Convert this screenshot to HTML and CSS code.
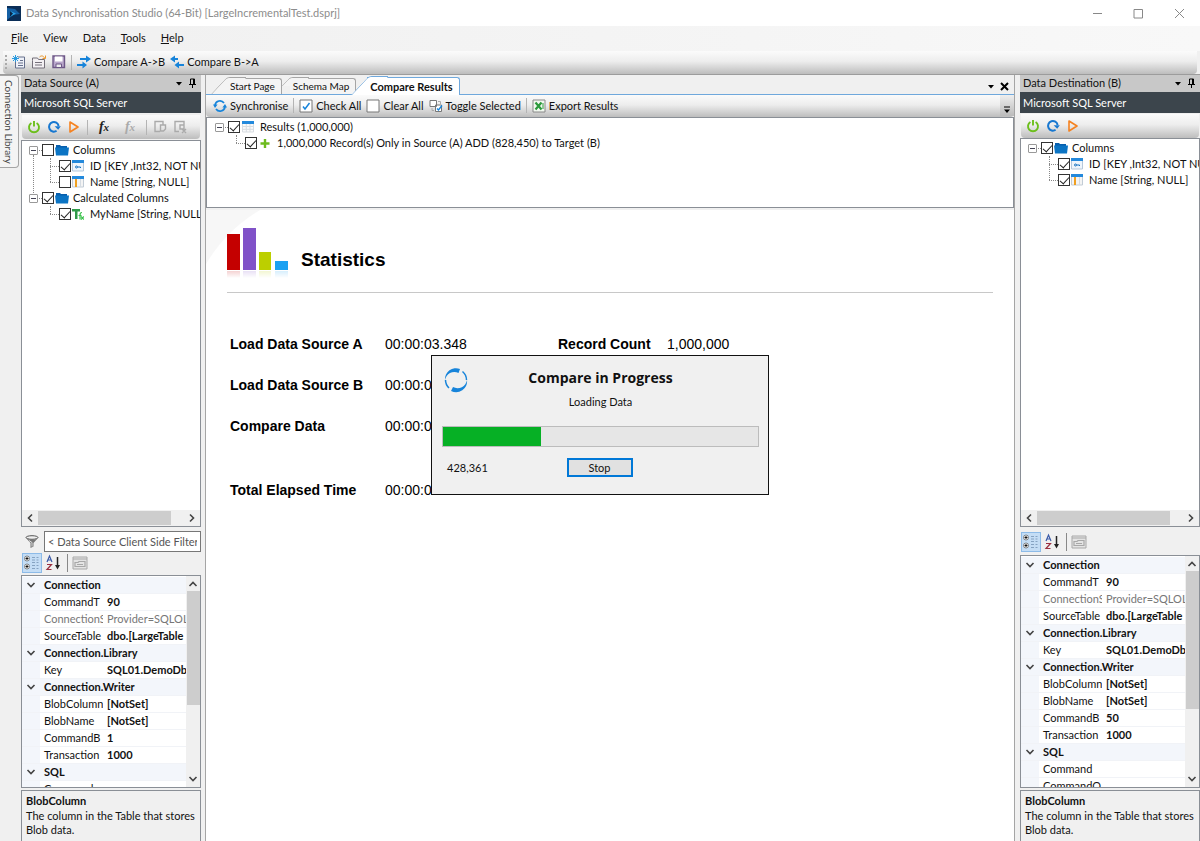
FILE: index.html
```html
<!DOCTYPE html>
<html lang="en">
<head>
    <meta charset="UTF-8">
    <meta name="viewport" content="width=device-width, initial-scale=1.0">
    <title>Data Synchronisation Studio</title>
    <link rel="stylesheet" href="styles.css">
</head>
<body>
    <!-- Shared icons -->
    <svg class="sprite" aria-hidden="true">
        <symbol id="i-power" viewBox="0 0 14 14"><path d="M4.4 3A5 5 0 1 0 9.6 3M7 1v5.5" fill="none" stroke="#6cbf1c" stroke-width="1.9"/></symbol>
        <symbol id="i-refresh" viewBox="0 0 14 14"><path d="M9.6 10.8A4.8 4.8 0 1 1 11.6 6" fill="none" stroke="#1878d0" stroke-width="2"/><path d="M7.6 6.2h6.2l-2.6 3.6z" fill="#1878d0"/></symbol>
        <symbol id="i-play" viewBox="0 0 14 14"><path d="M3 2l8 5-8 5z" fill="none" stroke="#f58220" stroke-width="1.6" stroke-linejoin="round"/></symbol>
        <symbol id="i-folder" viewBox="0 0 14 12"><path d="M1 1h4l1 1h6v9H1z" fill="#075fae"/><path d="M0 3.500h14l-1 8H1z" fill="#0b74c4"/></symbol>
        <symbol id="i-key" viewBox="0 0 12 12"><path d="M.5.500h11v10.500H.5z" fill="#eef5fc" stroke="#b5c7da"/><path d="M0 0h12v3H0z" fill="#2389dc"/><circle cx="4.500" cy="7" r="1" fill="none" stroke="#1270c0"/><path d="M5.500 7h3v1" fill="none" stroke="#1270c0"/></symbol>
        <symbol id="i-field" viewBox="0 0 12 12"><path d="M.5.500h11v10.500H.5z" fill="#f4f4f4" stroke="#c2ccd6"/><path d="M0 0h12v3H0z" fill="#2389dc"/><path d="M3 3h2v8H3z" fill="#f0a020"/><path d="M8.500 3v8" stroke="#d5dbe2"/></symbol>
        <symbol id="i-grid" viewBox="0 0 12 12"><path d="M.5.500h11v10.500H.5zM4.300 3v8M8 3v8M1 5.500h10M1 8.300h10" fill="#fafafa" stroke="#d8dde2"/><path d="M0 0h12v3H0z" fill="#2389dc"/></symbol>
        <symbol id="i-pin" viewBox="0 0 9 10"><path d="M2.500 6V1h4v5M5.500 1v5M1 6.500h7M4.500 6.500V10" fill="none" stroke="#000"/></symbol>
        <symbol id="i-down" viewBox="0 0 8 5"><path d="M1 1h6L4 4.500z" fill="#000"/></symbol>
        <symbol id="i-chev" viewBox="0 0 10 6"><path d="M1.500 1L5 4.500 8.500 1" fill="none" stroke="#444" stroke-width="1.600"/></symbol>
        <symbol id="i-sort" viewBox="0 0 18 18"><path d="M2 8l2.500-6L7 8M3 6h3" fill="none" stroke="#3b5aa8" stroke-width="1.200"/><path d="M2 10.500h4.500L2 15.500h4.500" fill="none" stroke="#9b3040" stroke-width="1.200"/><path d="M12.500 3v10" stroke="#222" stroke-width="1.500"/><path d="M10 11h5l-2.500 4.500z" fill="#222"/></symbol>
        <symbol id="i-cat" viewBox="0 0 18 18"><circle cx="4" cy="4.500" r="2.500" fill="#fff" stroke="#555" stroke-width=".7"/><circle cx="4" cy="12.500" r="2.500" fill="#fff" stroke="#555" stroke-width=".7"/><path d="M2.500 4.500h3M4 3v3M2.500 12.500h3M4 11v3" stroke="#111"/><path d="M9 3.500h3M9 6h3M9 8.500h3M9 11.500h3M9 14.500h3M13.500 3.500h2M13.500 6h2M13.500 8.500h2M13.500 11.500h2M13.500 14.500h2" stroke="#86a3c2"/></symbol>
        <symbol id="i-pages" viewBox="0 0 16 16"><path d="M1 2h14v12H1z" fill="#e4e4e4" stroke="#a8a8a8"/><path d="M1 4h14M3 7.500h3l1-1h6v5H3zM5 9.500h6" fill="none" stroke="#a8a8a8" stroke-width="1.200"/></symbol>
        <symbol id="i-sync" viewBox="0 0 14 14"><path d="M2 6A5 5 0 0 1 11 4M12 8A5 5 0 0 1 3 10" fill="none" stroke="#1784da" stroke-width="1.700"/><path d="M0 5.500h4.600L2 9zM9.400 8.500H14L12 5z" fill="#1784da"/></symbol>
    </svg>

    <header class="titlebar">
        <svg class="logo" width="14" height="15" viewBox="0 0 14 15"><path d="M0 0h14v15H0z" fill="#0b2e57"/><path d="M0 2l8 1 5 5-7 1-6 5z" fill="#1560a4"/><path d="M3 5l6 2.500L3 11z" fill="#29a3e8"/><path d="M3 5l3 2.500L3 11z" fill="#0a2444"/></svg>
        <span class="title">Data Synchronisation Studio (64-Bit) [LargeIncrementalTest.dsprj]</span>
        <button class="win-btn" aria-label="Minimize"><svg width="11" height="11"><path d="M1 5.500h9" stroke="#888"/></svg></button>
        <button class="win-btn" aria-label="Maximize"><svg width="11" height="11"><path d="M1 1.500h8.500v8.500H1z" fill="none" stroke="#888"/></svg></button>
        <button class="win-btn" aria-label="Close"><svg width="11" height="11"><path d="M1 1l9 9M10 1l-9 9" stroke="#888"/></svg></button>
    </header>

    <nav class="menubar">
        <button><u>F</u>ile</button>
        <button>View</button>
        <button>Data</button>
        <button><u>T</u>ools</button>
        <button><u>H</u>elp</button>
    </nav>

    <div class="toolbar main-toolbar">
        <span class="grip"></span>
        <button aria-label="New"><svg width="14" height="14" viewBox="0 0 14 14"><path d="M6 2h6.500v11h-9V7" fill="#eef1f8" stroke="#66708c"/><path d="M6 8h5M6 10.500h5M8 5.500h3" stroke="#66708c"/><path d="M3.500 0v7M0 3.500h7M1 1l5 5M6 1L1 6" stroke="#2a9be0"/></svg></button>
        <button aria-label="Open"><svg width="16" height="14" viewBox="0 0 16 14"><path d="M1.500 5.500V3h5l1 1.500h6v8.500h-12z" fill="#f3f0f3" stroke="#75707a"/><path d="M4 7.500h7M4 10h7" stroke="#75707a"/><path d="M8.500 2c2-2 4-1 5 1M14.500.500v3h-3" fill="none" stroke="#e9962c"/></svg></button>
        <button aria-label="Save"><svg width="14" height="14" viewBox="0 0 14 14"><path d="M1 1h11.500v11.500H1z" fill="#b9a7cb" stroke="#6d5787" stroke-width="1.400"/><path d="M3 1.500h7.500v5H3z" fill="#fff"/><path d="M4 9h5.500v3.500H4z" fill="#eee" stroke="#6d5787"/></svg></button>
        <span class="sep"></span>
        <button><svg width="14" height="14" viewBox="0 0 14 14"><path d="M3 4h7M0 10h6" stroke="#1784da" stroke-width="2"/><path d="M9 .5L14 4 9 7.500zM5.500 6.500l4.500 3.500-4.500 3.500z" fill="#1784da"/></svg>Compare A-&gt;B</button>
        <button><svg width="14" height="14" viewBox="0 0 14 14"><path d="M4 4h4M8 10h6" stroke="#1784da" stroke-width="2"/><path d="M5 .5L0 4l5 3.500zM9 6.500L4.500 10 9 13.500z" fill="#1784da"/></svg>Compare B-&gt;A</button>
    </div>

    <div class="workspace">
        <div class="rail"><button class="rail-tab">Connection Library</button></div>

        <!-- Data Source (A) -->
        <section class="panel">
            <div class="panel-head"><span>Data Source (A)</span><svg width="8" height="5"><use href="#i-down"/></svg><svg width="9" height="10"><use href="#i-pin"/></svg></div>
            <div class="provider">Microsoft SQL Server</div>
            <div class="toolbar panel-toolbar">
                <button aria-label="Connect"><svg width="14" height="14"><use href="#i-power"/></svg></button>
                <button aria-label="Refresh"><svg width="14" height="14"><use href="#i-refresh"/></svg></button>
                <button aria-label="Run"><svg width="14" height="14"><use href="#i-play"/></svg></button>
                <span class="sep"></span>
                <button class="fx">f<small>x</small></button>
                <button class="fx off">f<small>x</small></button>
                <span class="sep"></span>
                <button aria-label="Add filter"><svg width="14" height="14" viewBox="0 0 14 14"><path d="M7 11.500H2v-10h8v3M7.500 5h5v4l-2 2h-3z" fill="none" stroke="#aaa" stroke-width="1.400"/></svg></button>
                <button aria-label="Clear filter"><svg width="14" height="14" viewBox="0 0 14 14"><path d="M6 11.500H2v-10h9v3M7 5h4v4H7zM9 9l4 4M13 9l-4 4" fill="none" stroke="#aaa" stroke-width="1.400"/></svg></button>
            </div>
            <div class="tree-box">
                <ul class="tree">
                    <li class="line"><button class="toggle" aria-label="Collapse"></button><label><input type="checkbox"><svg width="14" height="12"><use href="#i-folder"/></svg><span>Columns</span></label>
                        <ul>
                            <li><label><input type="checkbox" checked><svg width="12" height="12"><use href="#i-key"/></svg><span>ID [KEY ,Int32, NOT NULL]</span></label></li>
                            <li><label><input type="checkbox"><svg width="12" height="12"><use href="#i-field"/></svg><span>Name [String, NULL]</span></label></li>
                        </ul>
                    </li>
                    <li><button class="toggle" aria-label="Collapse"></button><label><input type="checkbox" checked><svg width="14" height="12"><use href="#i-folder"/></svg><span>Calculated Columns</span></label>
                        <ul>
                            <li><label><input type="checkbox" checked><svg width="12" height="12" viewBox="0 0 12 12"><path d="M0 1h8v2.500H5.500V11H3V3.500H0z" fill="#2f9a48"/><path d="M10 4.500c-1.500 0-2 1-2 3v4M6.500 7.500h3M9 8.500l3 3M12 8.500l-3 3" fill="none" stroke="#3cc24e" stroke-width="1.200"/></svg><span>MyName [String, NULL]</span></label></li>
                        </ul>
                    </li>
                </ul>
                <div class="hscroll"><svg width="6" height="10" viewBox="0 0 6 10"><path d="M5 1.500L1.500 5 5 8.500" fill="none" stroke="#444" stroke-width="1.600"/></svg><span class="thumb"></span><svg width="6" height="10" viewBox="0 0 6 10"><path d="M1 1.500L4.500 5 1 8.500" fill="none" stroke="#444" stroke-width="1.600"/></svg></div>
            </div>
            <div class="filter">
                <svg width="14" height="14" viewBox="0 0 14 14"><ellipse cx="7" cy="2.500" rx="6" ry="1.800" fill="#eee" stroke="#555"/><path d="M1 3l4.500 5v5l3-1.500V8L13 3c-2 2-10 2-12 0z" fill="#777"/><path d="M4 5.500l3 2v4" fill="none" stroke="#ddd"/></svg>
                <input type="text" aria-label="Filter" value="&lt; Data Source Client Side Filter Expression &gt;">
            </div>
            <div class="grid-toolbar">
                <button class="on" aria-label="Categorized"><svg width="18" height="18"><use href="#i-cat"/></svg></button>
                <button aria-label="Alphabetical"><svg width="18" height="18"><use href="#i-sort"/></svg></button>
                <span class="sep"></span>
                <button aria-label="Property pages"><svg width="16" height="16"><use href="#i-pages"/></svg></button>
            </div>
            <div class="props">
                <table>
                    <colgroup><col class="c-gutter"><col class="c-name"><col></colgroup>
                    <tr class="cat"><td><svg width="10" height="6"><use href="#i-chev"/></svg></td><th colspan="2">Connection</th></tr>
                    <tr><td></td><th>CommandT</th><td>90</td></tr>
                    <tr class="readonly"><td></td><th>ConnectionS</th><td>Provider=SQLOL</td></tr>
                    <tr><td></td><th>SourceTable</th><td>dbo.[LargeTable</td></tr>
                    <tr class="cat"><td><svg width="10" height="6"><use href="#i-chev"/></svg></td><th colspan="2">Connection.Library</th></tr>
                    <tr><td></td><th>Key</th><td>SQL01.DemoDb</td></tr>
                    <tr class="cat"><td><svg width="10" height="6"><use href="#i-chev"/></svg></td><th colspan="2">Connection.Writer</th></tr>
                    <tr><td></td><th>BlobColumn</th><td>[NotSet]</td></tr>
                    <tr><td></td><th>BlobName</th><td>[NotSet]</td></tr>
                    <tr><td></td><th>CommandB</th><td>1</td></tr>
                    <tr><td></td><th>Transaction</th><td>1000</td></tr>
                    <tr class="cat"><td><svg width="10" height="6"><use href="#i-chev"/></svg></td><th colspan="2">SQL</th></tr>
                    <tr><td></td><th>Command</th><td></td></tr>
                </table>
                <div class="vscroll"><svg class="up" width="10" height="6"><use href="#i-chev"/></svg><span class="thumb"></span><svg width="10" height="6"><use href="#i-chev"/></svg></div>
            </div>
            <div class="help"><b>BlobColumn</b><p>The column in the Table that stores Blob data.</p></div>
        </section>

        <!-- Compare results -->
        <main class="center">
            <div class="tabs">
                <button class="tab">Start Page</button>
                <button class="tab">Schema Map</button>
                <button class="tab active">Compare Results</button>
                <span class="tab-tools"><svg width="8" height="5"><use href="#i-down"/></svg><svg width="9" height="9" viewBox="0 0 9 9"><path d="M1 1l7 7M8 1L1 8" stroke="#000" stroke-width="2"/></svg></span>
            </div>
            <div class="toolbar result-toolbar">
                <button><svg width="14" height="14"><use href="#i-sync"/></svg>Synchronise</button>
                <span class="sep"></span>
                <button><svg width="14" height="14" viewBox="0 0 14 14"><path d="M1 1h12v12H1z" fill="#fff" stroke="#777"/><path d="M4 7.500L6 10l4.500-6" fill="none" stroke="#1784da" stroke-width="1.500"/></svg>Check All</button>
                <button><svg width="14" height="14" viewBox="0 0 14 14"><path d="M1 1h12v12H1z" fill="#fff" stroke="#777"/></svg>Clear All</button>
                <button><svg width="14" height="14" viewBox="0 0 14 14"><path d="M6.500 6h6v6.500h-6zM1 1.500h6.500v6H1z" fill="#fff" stroke="#777"/><path d="M9 2.500h2.500V5M3 9v2.500h2" fill="none" stroke="#aaa"/><path d="M8 9.500l1.500 1.500L13 6.500" fill="none" stroke="#1784da" stroke-width="1.400"/></svg>Toggle Selected</button>
                <span class="sep"></span>
                <button><svg width="14" height="14" viewBox="0 0 14 14"><path d="M1 1h12v12H1z" fill="#f2f8f0" stroke="#888"/><path d="M3.500 3.500l6 7M9.500 3.500l-6 7" stroke="#2c9a3c" stroke-width="2.200"/><path d="M11 4v6" stroke="#2c9a3c"/></svg>Export Results</button>
                <span class="overflow"><svg width="8" height="8" viewBox="0 0 8 8"><path d="M1 1h6" stroke="#000"/><path d="M1 3.500h6L4 7z"/></svg></span>
            </div>
            <div class="results">
                <ul class="tree">
                    <li><button class="toggle" aria-label="Collapse"></button><label><input type="checkbox" checked><svg width="12" height="12"><use href="#i-grid"/></svg><span>Results (1,000,000)</span></label>
                        <ul>
                            <li><label><input type="checkbox" checked><svg width="12" height="12" viewBox="0 0 12 12"><path d="M6 2v9M1.500 6.500h9" stroke="#6dbb1f" stroke-width="2.400"/></svg><span>1,000,000 Record(s) Only in Source (A) ADD (828,450) to Target (B)</span></label></li>
                        </ul>
                    </li>
                </ul>
            </div>
            <div class="stats">
                <div class="stats-head">
                    <svg width="62" height="50" viewBox="0 0 62 50">
                        <defs><linearGradient id="fade" x1="0" y1="0" x2="0" y2="1"><stop offset="0" stop-color="#fff" stop-opacity=".8"/><stop offset="1" stop-color="#fff"/></linearGradient></defs>
                        <path d="M0 6h13v36H0z" fill="#c40000"/><path d="M16 0h13v42H16z" fill="#8052c8"/><path d="M32 24h12v18H32z" fill="#bccf00"/><path d="M48 33h13v9H48z" fill="#1ba1f2"/>
                        <path d="M0 43h13v7H0z" fill="#c40000"/><path d="M16 43h13v7H16z" fill="#8052c8"/><path d="M32 43h12v7H32z" fill="#bccf00"/><path d="M48 43h13v7H48z" fill="#1ba1f2"/><path d="M0 42h62v8H0z" fill="url(#fade)"/>
                    </svg>
                    <h1>Statistics</h1>
                </div>
                <dl>
                    <dt>Load Data Source A</dt><dd>00:00:03.348</dd><dt>Record Count</dt><dd>1,000,000</dd>
                    <dt>Load Data Source B</dt><dd>00:00:0</dd><dt></dt><dd></dd>
                    <dt>Compare Data</dt><dd>00:00:0</dd><dt></dt><dd></dd>
                    <dt class="total">Total Elapsed Time</dt><dd class="total">00:00:0</dd>
                </dl>
            </div>

            <div class="dialog" role="dialog" aria-label="Compare in Progress">
                <svg class="spinner" width="26" height="26" viewBox="0 0 26 26"><path d="M2 13A11 11 0 0 1 17 2l-1.500 4A9.500 9.500 0 0 0 2 13zM24 13A11 11 0 0 1 8 24l2-4A9.500 9.500 0 0 0 24 13z" fill="#1784da"/><path d="M19.500 4.500A11 11 0 0 1 23.500 13M2.500 13A11 11 0 0 0 6 21" fill="none" stroke="#1784da" stroke-width="1.500"/></svg>
                <h2>Compare in Progress</h2>
                <p>Loading Data</p>
                <div class="progress" role="progressbar" aria-valuenow="31"><span style="width: 31%"></span></div>
                <div class="dialog-foot"><span>428,361</span><button>Stop</button></div>
            </div>
        </main>

        <!-- Data Destination (B) -->
        <section class="panel panel-b">
            <div class="panel-head"><span>Data Destination (B)</span><svg width="8" height="5"><use href="#i-down"/></svg><svg width="9" height="10"><use href="#i-pin"/></svg></div>
            <div class="provider">Microsoft SQL Server</div>
            <div class="toolbar panel-toolbar">
                <button aria-label="Connect"><svg width="14" height="14"><use href="#i-power"/></svg></button>
                <button aria-label="Refresh"><svg width="14" height="14"><use href="#i-refresh"/></svg></button>
                <button aria-label="Run"><svg width="14" height="14"><use href="#i-play"/></svg></button>
            </div>
            <div class="tree-box">
                <ul class="tree">
                    <li><button class="toggle" aria-label="Collapse"></button><label><input type="checkbox" checked><svg width="14" height="12"><use href="#i-folder"/></svg><span>Columns</span></label>
                        <ul>
                            <li><label><input type="checkbox" checked><svg width="12" height="12"><use href="#i-key"/></svg><span>ID [KEY ,Int32, NOT NULL]</span></label></li>
                            <li><label><input type="checkbox" checked><svg width="12" height="12"><use href="#i-field"/></svg><span>Name [String, NULL]</span></label></li>
                        </ul>
                    </li>
                </ul>
                <div class="hscroll"><svg width="6" height="10" viewBox="0 0 6 10"><path d="M5 1.500L1.500 5 5 8.500" fill="none" stroke="#444" stroke-width="1.600"/></svg><span class="thumb"></span><svg width="6" height="10" viewBox="0 0 6 10"><path d="M1 1.500L4.500 5 1 8.500" fill="none" stroke="#444" stroke-width="1.600"/></svg></div>
            </div>
            <div class="grid-toolbar">
                <button class="on" aria-label="Categorized"><svg width="18" height="18"><use href="#i-cat"/></svg></button>
                <button aria-label="Alphabetical"><svg width="18" height="18"><use href="#i-sort"/></svg></button>
                <span class="sep"></span>
                <button aria-label="Property pages"><svg width="16" height="16"><use href="#i-pages"/></svg></button>
            </div>
            <div class="props">
                <table>
                    <colgroup><col class="c-gutter"><col class="c-name"><col></colgroup>
                    <tr class="cat"><td><svg width="10" height="6"><use href="#i-chev"/></svg></td><th colspan="2">Connection</th></tr>
                    <tr><td></td><th>CommandT</th><td>90</td></tr>
                    <tr class="readonly"><td></td><th>ConnectionS</th><td>Provider=SQLOL</td></tr>
                    <tr><td></td><th>SourceTable</th><td>dbo.[LargeTable</td></tr>
                    <tr class="cat"><td><svg width="10" height="6"><use href="#i-chev"/></svg></td><th colspan="2">Connection.Library</th></tr>
                    <tr><td></td><th>Key</th><td>SQL01.DemoDb</td></tr>
                    <tr class="cat"><td><svg width="10" height="6"><use href="#i-chev"/></svg></td><th colspan="2">Connection.Writer</th></tr>
                    <tr><td></td><th>BlobColumn</th><td>[NotSet]</td></tr>
                    <tr><td></td><th>BlobName</th><td>[NotSet]</td></tr>
                    <tr><td></td><th>CommandB</th><td>50</td></tr>
                    <tr><td></td><th>Transaction</th><td>1000</td></tr>
                    <tr class="cat"><td><svg width="10" height="6"><use href="#i-chev"/></svg></td><th colspan="2">SQL</th></tr>
                    <tr><td></td><th>Command</th><td></td></tr>
                    <tr><td></td><th>CommandO</th><td></td></tr>
                </table>
                <div class="vscroll"><svg class="up" width="10" height="6"><use href="#i-chev"/></svg><span class="thumb"></span><svg width="10" height="6"><use href="#i-chev"/></svg></div>
            </div>
            <div class="help"><b>BlobColumn</b><p>The column in the Table that stores Blob data.</p></div>
        </section>
    </div>
</body>
</html>
```
FILE: styles.css
```css
* {
    box-sizing: border-box;
}
body {
    margin: 0;
    height: 100vh;
    display: flex;
    flex-direction: column;
    overflow: hidden;
    background: #f0f0f0;
    color: #111;
    font: 11px/16px Lato, "Open Sans", sans-serif;
}
button, input {
    font: inherit;
    color: inherit;
    margin: 0;
    padding: 0;
}
button {
    border: 0;
    background: none;
    white-space: nowrap;
}
svg {
    display: block;
    flex: none;
}
ul, dl, dd, p, h1, h2 {
    margin: 0;
    padding: 0;
    list-style: none;
}
.sprite {
    position: absolute;
    width: 0;
    height: 0;
}

/* window chrome */
.titlebar {
    display: flex;
    align-items: center;
    height: 26px;
    padding: 0 10px 0 7px;
    background: #fff;
    color: #8c8c8c;
}
.title {
    flex: 1;
    padding-left: 5px;
}
.win-btn {
    display: flex;
    justify-content: center;
    width: 21px;
    margin-left: 20px;
}
.menubar {
    display: flex;
    gap: 15px;
    height: 25px;
    padding: 0 11px 1px;
    background: linear-gradient(90deg, #f0f0f0, #f8f8f8);
}

/* toolbars */
.toolbar {
    display: flex;
    align-items: center;
    background: linear-gradient(#fbfbfb, #ededed 45%, #bdbdbd);
    border-radius: 0 0 4px 4px;
}
.toolbar button {
    display: flex;
    align-items: center;
    gap: 3px;
}
.sep {
    width: 1px;
    height: 15px;
    background: #b4b4b4;
}
.main-toolbar {
    height: 23px;
    margin: 0 3px;
    padding-bottom: 1px;
    gap: 5px;
}
.grip {
    height: 14px;
    margin: 0 0 0 2px;
    border-left: 2px dotted #aaa;
}

.workspace {
    flex: 1;
    display: flex;
    min-height: 0;
    border-top: 1px solid #9c9c9c;
}
.rail {
    width: 21px;
}
.rail-tab {
    writing-mode: vertical-rl;
    width: 19px;
    height: 93px;
    border: 1px solid #a5a5a5;
    border-left: 0;
    border-radius: 0 4px 4px 0;
    background: #f4f4f4;
    color: #444;
    font-size: 10px;
}

/* side panels */
.panel {
    display: flex;
    flex-direction: column;
    width: 180px;
    flex: none;
}
.panel-head {
    display: flex;
    align-items: center;
    gap: 5px;
    height: 17px;
    padding: 0 4px 1px 3px;
    background: #c8c8c8;
}
.panel-head span {
    flex: 1;
}
.provider {
    height: 21px;
    padding: 3px;
    background: #3c454c;
    color: #fff;
}
.panel-toolbar {
    height: 24px;
    margin: 2px 1px 1px;
    padding-left: 5px;
    gap: 6px;
}
.panel-b .panel-toolbar {
    margin: 1px 1px 0;
}
.toolbar .fx {
    width: 20px;
    justify-content: center;
    gap: 0;
    color: #222;
    font: italic bold 14px/14px "Liberation Serif", serif;
}
.fx small {
    font-size: 11px;
}
.toolbar .off {
    color: #aaa;
}
.tree-box {
    flex: 1;
    display: flex;
    flex-direction: column;
    min-height: 0;
    border: 1px solid #8a8f96;
    background: #fff;
}

/* trees */
.tree {
    flex: 1;
    overflow: hidden;
    padding: 1px 0 0 7px;
}
.tree li {
    position: relative;
    padding-left: 13px;
}
.tree li li {
    padding-left: 30px;
}
.tree label {
    display: flex;
    align-items: center;
    height: 16px;
    white-space: nowrap;
}
.tree label svg {
    margin: 0 4px 0 1px;
}
.tree li li svg {
    margin-right: 6px;
}
.tree input {
    appearance: none;
    position: relative;
    flex: none;
    width: 12px;
    height: 12px;
    border: 1px solid #333;
    background: #fff;
}
.tree input:checked::after {
    content: "";
    position: absolute;
    left: 3px;
    top: 0;
    width: 4px;
    height: 8px;
    border: solid #222;
    border-width: 0 1px 1px 0;
    transform: rotate(42deg);
}
.tree ul {
    margin-left: -13px;
}
.tree li::before {
    content: "";
    position: absolute;
    left: 8px;
    top: 8px;
    width: 5px;
    border-top: 1px dotted #888;
}
.tree li li::before {
    left: 21px;
    width: 9px;
}
.tree li li::after,
.tree .line::after {
    content: "";
    position: absolute;
    left: 21px;
    top: 0;
    height: 8px;
    border-left: 1px dotted #888;
}
.tree li li + li::after {
    top: -8px;
    height: 16px;
}
.tree .line::after {
    left: 4px;
    top: 13px;
    height: 40px;
}
.toggle {
    position: absolute;
    left: 0;
    top: 4px;
    width: 9px;
    height: 9px;
    border: 1px solid #999;
    border-radius: 1px;
    background: linear-gradient(#445, #445) center / 5px 1px no-repeat #fff;
}

/* scroll bars */
.hscroll {
    display: flex;
    align-items: center;
    gap: 5px;
    height: 16px;
    padding: 0 5px;
    background: #f0f0f0;
}
.hscroll .thumb {
    width: 133px;
    height: 14px;
    margin-right: auto;
    background: #cdcdcd;
}
.vscroll {
    display: flex;
    flex-direction: column;
    align-items: center;
    justify-content: space-between;
    width: 14px;
    padding: 5px 0;
    background: #f0f0f0;
}
.vscroll .thumb {
    width: 13px;
    height: 114px;
    margin: 4px 0 auto;
    background: #cdcdcd;
}
.panel-b .vscroll .thumb {
    height: 138px;
}
.up {
    transform: rotate(180deg);
}

.filter {
    display: flex;
    align-items: center;
    justify-content: space-between;
    margin-top: 4px;
    padding-left: 4px;
}
.filter input {
    width: 157px;
    height: 21px;
    padding: 0 3px 1px;
    border: 1px solid #777;
    background: #fff;
    color: #555;
}
.grid-toolbar {
    display: flex;
    align-items: center;
    gap: 4px;
    height: 23px;
    padding: 0 2px 1px;
}
.panel-b .grid-toolbar {
    margin: 4px 0 1px;
}
.grid-toolbar button {
    display: flex;
}
.grid-toolbar .on {
    background: #c4ddf5;
    outline: 1px solid #8dbbe8;
}
.grid-toolbar .sep {
    height: 18px;
    background: #888;
}
.props {
    display: flex;
    flex: none;
    height: 213px;
    overflow: hidden;
    border: 1px solid #8a8f96;
    background: #fff;
}
.panel-b .props {
    height: 233px;
}
.props table {
    flex: 1;
    width: 0;
    margin-top: 1px;
    table-layout: fixed;
    border-spacing: 0;
    align-self: flex-start;
}
.c-gutter {
    width: 18px;
}
.c-name {
    width: 63px;
}
.props td, .props th {
    height: 17px;
    padding: 0 0 0 4px;
    overflow: hidden;
    white-space: nowrap;
    line-height: 16px;
    text-align: left;
    font-weight: normal;
    border-bottom: 1px solid #f1f3f7;
}
.props th + td, .props .cat th {
    font-weight: bold;
}
.props td:first-child, .props .cat th {
    background: #f3f6fb;
}
.props .readonly th, .props .readonly td {
    color: #777;
    font-weight: normal;
}
.help {
    height: 51px;
    margin-top: 2px;
    padding: 1px 4px;
    border: 1px solid #8a8f96;
    border-bottom: 0;
    line-height: 14px;
}
.help b {
    display: block;
    line-height: 17px;
}

/* centre */
.center {
    flex: 1;
    display: flex;
    flex-direction: column;
    position: relative;
    margin: 0 5px 0 4px;
    border: solid #a5a5a5;
    border-width: 0 1px;
    background: #f0f0f0;
}
.tabs {
    display: flex;
    align-items: flex-end;
    height: 20px;
    padding-left: 21px;
    border-bottom: 1px solid #6fa8dc;
}
.tab {
    position: relative;
    isolation: isolate;
    height: 16px;
    margin-right: 8px;
    padding: 0 6px 0 3px;
    border: 1px solid #a5a5a5;
    border-width: 1px 1px 0 0;
    border-radius: 0 3px 0 0;
    background: #f4f4f4;
    font-size: 10px;
    line-height: 15px;
}
.tab::before {
    content: "";
    position: absolute;
    left: -16px;
    bottom: 0;
    width: 19px;
    height: 16px;
    border: solid #a5a5a5;
    border-width: 1px 0 0 1px;
    border-radius: 3px 0 0 0;
    background: inherit;
    transform: skewX(-43deg);
    transform-origin: left bottom;
    z-index: -1;
}
.tab:nth-child(2)::before {
    clip-path: inset(0 0 8px 0);
}
.tab.active {
    height: 18px;
    margin-left: 3px;
    margin-bottom: -1px;
    background: #fff;
    border-color: #6fa8dc;
    font-size: 11px;
    font-weight: bold;
    line-height: 16px;
}
.tab.active::before {
    height: 18px;
    border-color: #6fa8dc;
}
.tab-tools {
    display: flex;
    align-items: center;
    gap: 5px;
    margin: 0 5px 3px auto;
}
.result-toolbar {
    height: 22px;
    padding: 0 0 1px 7px;
    gap: 5px;
}
.overflow {
    align-self: stretch;
    display: flex;
    align-items: flex-end;
    margin-left: auto;
    padding: 2px 3px;
    background: linear-gradient(#eee, #bbb);
}
.results {
    height: 91px;
    padding-left: 1px;
    border: 1px solid #8a8f96;
    background: #fff;
}
.results .tree label svg {
    margin: 0 6px 0 2px;
}
.stats {
    flex: 1;
    margin-top: 2px;
    padding: 18px 21px;
    background: radial-gradient(circle at 130px 130px, #fff 150px, #f7f7f7 151px) 0 0 / 90px 90px no-repeat #fff;
    color: #000;
    font: 14px/17px "Liberation Sans", Arial, sans-serif;
}
.stats-head {
    display: flex;
    align-items: center;
    gap: 12px;
    height: 65px;
    padding-bottom: 15px;
    border-bottom: 1px solid #c8c8c8;
}
.stats-head h1 {
    padding-top: 14px;
    font-size: 19px;
    line-height: 22px;
}
.stats dl {
    display: grid;
    grid-template-columns: 155px 173px 109px 1fr;
    row-gap: 24px;
    padding: 43px 3px;
}
.stats dt {
    font-weight: bold;
}
.stats .total {
    margin-top: 23px;
}

.dialog {
    position: absolute;
    left: 225px;
    top: 280px;
    width: 338px;
    height: 140px;
    padding: 14px 9px 0 10px;
    border: 1px solid #111;
    background: #f0f0f0;
    text-align: center;
}
.spinner {
    position: absolute;
    left: 11px;
    top: 11px;
}
.dialog h2 {
    font: bold 14px/16px "Open Sans", sans-serif;
}
.dialog p {
    margin: 8px 0 16px;
}
.progress {
    height: 21px;
    border: 1px solid #bcbcbc;
    background: #e6e6e6;
}
.progress span {
    display: block;
    height: 100%;
    background: #06b025;
}
.dialog-foot {
    display: grid;
    grid-template-columns: 1fr 66px 1fr;
    align-items: center;
    margin-top: 11px;
    padding: 0 7px 0 5px;
    text-align: left;
}
.dialog-foot button {
    height: 19px;
    border: 2px solid #0078d7;
    background: #e1e1e1;
    line-height: 15px;
    text-align: center;
}
```
